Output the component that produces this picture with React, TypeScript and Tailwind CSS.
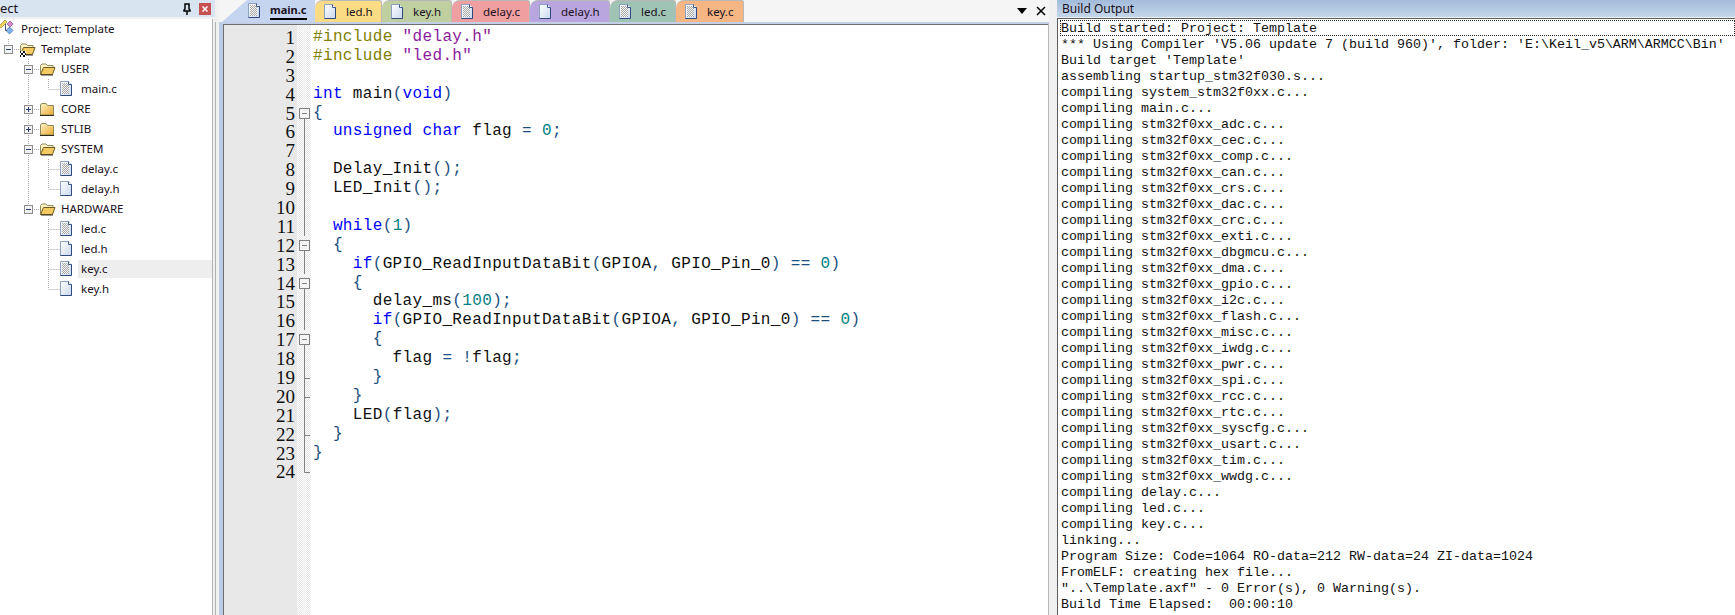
import React from "react";

type CellKind = "none" | "line" | "tee" | "corner" | "plus" | "minus" | "minusEnd";

const TreeCell = ({ kind }: { kind: CellKind }) => {
  const dotted = { stroke: "#a8a8a8", strokeWidth: 1, strokeDasharray: "1 1" };
  const boxed = kind === "plus" || kind === "minus" || kind === "minusEnd";
  return (
    <svg width="20" height="20" className="shrink-0">
      {kind === "line" && <line x1="8.5" y1="0" x2="8.5" y2="20" {...dotted} />}
      {kind === "tee" && (
        <>
          <line x1="8.5" y1="0" x2="8.5" y2="20" {...dotted} />
          <line x1="8.5" y1="10.5" x2="20" y2="10.5" {...dotted} />
        </>
      )}
      {kind === "corner" && (
        <>
          <line x1="8.5" y1="0" x2="8.5" y2="10" {...dotted} />
          <line x1="8.5" y1="10.5" x2="20" y2="10.5" {...dotted} />
        </>
      )}
      {boxed && (
        <>
          <line x1="8.5" y1="0" x2="8.5" y2={kind === "minusEnd" ? 7 : 20} {...dotted} />
          <line x1="12" y1="10.5" x2="20" y2="10.5" {...dotted} />
          <rect x="4.5" y="6.5" width="8" height="8" fill="#f2f2f2" stroke="#8c8c8c" />
          <line x1="6" y1="10.5" x2="11" y2="10.5" stroke="#2a3f7a" />
          {kind === "plus" && <line x1="8.5" y1="8" x2="8.5" y2="13" stroke="#2a3f7a" />}
        </>
      )}
    </svg>
  );
};

const FolderOpen = ({ chip }: { chip?: boolean }) => (
  <svg width="20" height="20" className="shrink-0">
    <path d="M0.5 15.5V6.5L2 5h4l1.500 1.500h5.500v2" fill="#fff3c4" stroke="#8d8a5c" />
    <path d="M0.500 15.500L3.500 8.500H15L12.500 15.500Z" fill="#f4c95f" stroke="#6e5a25" />
    <path d="M1 16h12" stroke="#3a3420" />
    {chip && (
      <g>
        <rect x="-1" y="12" width="7" height="6" fill="#fff" />
        <path d="M-1 12h2v2h-2zM3 12h2v2h-2zM1 14h2v2h-2zM5 14h1v2h-1zM-1 16h2v2h-2zM3 16h2v2h-2z" fill="#111" />
      </g>
    )}
  </svg>
);

const FolderClosed = () => (
  <svg width="20" height="20" className="shrink-0">
    <defs>
      <linearGradient id="closedFolder" x1="0" y1="0" x2="1" y2="1">
        <stop offset="0" stopColor="#fff4c8" />
        <stop offset="1" stopColor="#e9a92f" />
      </linearGradient>
    </defs>
    <path d="M0.500 16V5.500L2 4.500h4l1.500 2h6v9.500z" fill="url(#closedFolder)" stroke="#8d8a5c" />
    <path d="M0 16.500h14" stroke="#2c2a1c" />
  </svg>
);

const FileIcon = ({ hatched }: { hatched: boolean }) => (
  <svg width="14" height="16" className="shrink-0">
    <defs>
      <pattern id="fileHatch" width="2" height="2" patternUnits="userSpaceOnUse">
        <rect width="2" height="2" fill="#f4f4f4" />
        <rect width="1" height="1" fill="#a9a9a9" />
        <rect x="1" y="1" width="1" height="1" fill="#a9a9a9" />
      </pattern>
      <linearGradient id="fileFace" x1="0" y1="0" x2="1" y2="1">
        <stop offset="0" stopColor="#ffffff" />
        <stop offset="1" stopColor="#c9d8ee" />
      </linearGradient>
    </defs>
    <path d="M0.500 0.500H8.500L11.500 3.500V14.500H0.500Z" fill="url(#fileFace)" stroke="#8da0c0" />
    {hatched && <rect x="2" y="2" width="7" height="11" fill="url(#fileHatch)" />}
    <path d="M8.500 0.500V3.500H11.500" fill="#fff" stroke="#3e5a8c" />
    <path d="M11.500 3.500V14.500H0.500" fill="none" stroke="#2f4a7c" />
  </svg>
);

const ProjectIcon = () => (
  <svg width="20" height="20" className="shrink-0">
    <path d="M-1 7L5 1L7 3L1 9Z" fill="#f3d35c" stroke="#8d7a20" strokeWidth="0.6" />
    <path d="M7 5L10 2L13 5L10 8Z" fill="#d98bd0" stroke="#7b3b80" strokeWidth="0.6" />
    <path d="M6 11.500L9.500 8L13 11.500L9.500 15Z" fill="#7fb4e8" stroke="#2a5a9c" strokeWidth="0.6" />
    <path d="M5.500 5V11.500H7" fill="none" stroke="#4a5a7a" />
  </svg>
);

type TreeRow = {
  cells: CellKind[];
  icon: React.ReactNode;
  label: string;
  selected?: boolean;
};

const cFile = <FileIcon hatched />;
const hFile = <FileIcon hatched={false} />;

const treeRows: TreeRow[] = [
  { cells: ["minusEnd"], icon: <FolderOpen chip />, label: "Template" },
  { cells: ["none", "minus"], icon: <FolderOpen />, label: "USER" },
  { cells: ["none", "line", "corner"], icon: cFile, label: "main.c" },
  { cells: ["none", "plus"], icon: <FolderClosed />, label: "CORE" },
  { cells: ["none", "plus"], icon: <FolderClosed />, label: "STLIB" },
  { cells: ["none", "minus"], icon: <FolderOpen />, label: "SYSTEM" },
  { cells: ["none", "line", "tee"], icon: cFile, label: "delay.c" },
  { cells: ["none", "line", "corner"], icon: hFile, label: "delay.h" },
  { cells: ["none", "minusEnd"], icon: <FolderOpen />, label: "HARDWARE" },
  { cells: ["none", "none", "tee"], icon: cFile, label: "led.c" },
  { cells: ["none", "none", "tee"], icon: hFile, label: "led.h" },
  { cells: ["none", "none", "tee"], icon: cFile, label: "key.c", selected: true },
  { cells: ["none", "none", "corner"], icon: hFile, label: "key.h" },
];

const tabs = [
  { name: "led.h", c: false, color: "bg-[#fbdc84]", width: "w-[67px]" },
  { name: "key.h", c: false, color: "bg-[#bfcf9f]", width: "w-[70px]" },
  { name: "delay.c", c: true, color: "bg-[#ef9f9f]", width: "w-[78px]" },
  { name: "delay.h", c: false, color: "bg-[#b9a6de]", width: "w-[80px]" },
  { name: "led.c", c: true, color: "bg-[#9fc3b5]", width: "w-[66px]" },
  { name: "key.c", c: true, color: "bg-[#f6b684]", width: "w-[68px]" },
];

const Kw = ({ children }: { children: React.ReactNode }) => <span className="text-[#0000ff]">{children}</span>;
const Pn = ({ children }: { children: React.ReactNode }) => <span className="text-[#1c4f80]">{children}</span>;
const Nm = ({ children }: { children: React.ReactNode }) => <span className="text-[#008080]">{children}</span>;
const Pp = ({ children }: { children: React.ReactNode }) => <span className="text-[#808000]">{children}</span>;
const St = ({ children }: { children: React.ReactNode }) => <span className="text-[#8c1c9c]">{children}</span>;

const gpioCheck = (
  <>
    <Kw>if</Kw>
    <Pn>(</Pn>GPIO_ReadInputDataBit<Pn>(</Pn>GPIOA<Pn>,</Pn> GPIO_Pin_0<Pn>)</Pn> <Pn>==</Pn> <Nm>0</Nm>
    <Pn>)</Pn>
  </>
);

type Fold = "" | "box" | "line" | "tick" | "end";

const codeLines: { text: React.ReactNode; fold: Fold }[] = [
  { text: <><Pp>#include</Pp> <St>"delay.h"</St></>, fold: "" },
  { text: <><Pp>#include</Pp> <St>"led.h"</St></>, fold: "" },
  { text: "", fold: "" },
  { text: <><Kw>int</Kw> main<Pn>(</Pn><Kw>void</Kw><Pn>)</Pn></>, fold: "" },
  { text: <Pn>{"{"}</Pn>, fold: "box" },
  { text: <>  <Kw>unsigned</Kw> <Kw>char</Kw> flag <Pn>=</Pn> <Nm>0</Nm><Pn>;</Pn></>, fold: "line" },
  { text: "", fold: "line" },
  { text: <>  Delay_Init<Pn>();</Pn></>, fold: "line" },
  { text: <>  LED_Init<Pn>();</Pn></>, fold: "line" },
  { text: "", fold: "line" },
  { text: <>  <Kw>while</Kw><Pn>(</Pn><Nm>1</Nm><Pn>)</Pn></>, fold: "line" },
  { text: <>  <Pn>{"{"}</Pn></>, fold: "box" },
  { text: <>    {gpioCheck}</>, fold: "line" },
  { text: <>    <Pn>{"{"}</Pn></>, fold: "box" },
  { text: <>      delay_ms<Pn>(</Pn><Nm>100</Nm><Pn>);</Pn></>, fold: "line" },
  { text: <>      {gpioCheck}</>, fold: "line" },
  { text: <>      <Pn>{"{"}</Pn></>, fold: "box" },
  { text: <>        flag <Pn>= !</Pn>flag<Pn>;</Pn></>, fold: "line" },
  { text: <>      <Pn>{"}"}</Pn></>, fold: "tick" },
  { text: <>    <Pn>{"}"}</Pn></>, fold: "tick" },
  { text: <>    LED<Pn>(</Pn>flag<Pn>);</Pn></>, fold: "line" },
  { text: <>  <Pn>{"}"}</Pn></>, fold: "tick" },
  { text: <Pn>{"}"}</Pn>, fold: "line" },
  { text: "", fold: "end" },
];

const FoldMark = ({ kind }: { kind: Fold }) => (
  <svg width="14" height="19" className="shrink-0">
    {kind === "box" && (
      <>
        <line x1="7.500" y1="14" x2="7.500" y2="19" stroke="#808080" />
        <rect x="2.500" y="4.500" width="10" height="10" fill="#f4f4f4" stroke="#808080" />
        <line x1="5" y1="9.500" x2="10" y2="9.500" stroke="#808080" />
      </>
    )}
    {kind === "line" && <line x1="7.500" y1="0" x2="7.500" y2="19" stroke="#808080" />}
    {kind === "tick" && (
      <>
        <line x1="7.500" y1="0" x2="7.500" y2="19" stroke="#808080" />
        <line x1="7.500" y1="10.500" x2="13" y2="10.500" stroke="#808080" />
      </>
    )}
    {kind === "end" && <path d="M7.500 0V10.500H13" fill="none" stroke="#808080" />}
  </svg>
);

const stmFiles = [
  "adc", "cec", "comp", "can", "crs", "dac", "crc", "exti", "dbgmcu", "dma", "gpio", "i2c", "flash",
  "misc", "iwdg", "pwr", "spi", "rcc", "rtc", "syscfg", "usart", "tim", "wwdg",
];

const buildLines = [
  "*** Using Compiler 'V5.06 update 7 (build 960)', folder: 'E:\\Keil_v5\\ARM\\ARMCC\\Bin'",
  "Build target 'Template'",
  "assembling startup_stm32f030.s...",
  "compiling system_stm32f0xx.c...",
  "compiling main.c...",
  ...stmFiles.map((f) => `compiling stm32f0xx_${f}.c...`),
  "compiling delay.c...",
  "compiling led.c...",
  "compiling key.c...",
  "linking...",
  "Program Size: Code=1064 RO-data=212 RW-data=24 ZI-data=1024",
  "FromELF: creating hex file...",
  '"..\\Template.axf" - 0 Error(s), 0 Warning(s).',
  "Build Time Elapsed:  00:00:10",
];

export default function App() {
  return (
    <div className="flex h-[615px] w-[1735px] overflow-hidden bg-[#f0f0f0] font-['Noto_Sans',sans-serif] text-[11.5px] text-[#1a1020]">
      {/* Project panel */}
      <div className="flex w-[215px] shrink-0 flex-col">
        <div className="flex h-[17px] shrink-0 items-center bg-[#d8e4f0] pr-[4px]">
          <span className="text-[13px]">ect</span>
          <svg width="10" height="12" viewBox="0 0 10 12" className="ml-auto shrink-0">
            <path d="M3 1h4v5l1 1v1H2V7l1-1zM5 8v4" fill="none" stroke="#000" strokeWidth="1.500" />
          </svg>
          <div className="ml-[7px] flex h-[12px] w-[12px] shrink-0 items-center justify-center bg-[#c75050]">
            <svg width="6" height="6" viewBox="0 0 6 6">
              <path d="M0.500 0.500L5.500 5.500M5.500 0.500L0.500 5.500" stroke="#fff" strokeWidth="1.500" />
            </svg>
          </div>
        </div>
        <div className="mt-[2px] mr-[2px] flex-1 border-r border-[#b4b4b4] bg-white">
          <div className="flex h-[20px] items-center">
            <ProjectIcon />
            <span className="ml-[1px]">Project: Template</span>
          </div>
          {treeRows.map((row) => (
            <div key={row.label} className="flex h-[20px] items-center">
              {row.cells.map((c, i) => (
                <TreeCell key={i} kind={c} />
              ))}
              <div className="flex h-[20px] w-[20px] shrink-0 items-center">{row.icon}</div>
              <span className={`-ml-[2px] flex h-[18px] flex-1 items-center pl-[3px] ${row.selected ? "bg-[#eeeeee]" : ""}`}>
                {row.label}
              </span>
            </div>
          ))}
        </div>
      </div>

      {/* Editor */}
      <div className="flex w-[834px] shrink-0 flex-col pl-[4px]">
        <div className="flex h-[22px] shrink-0 items-stretch bg-[#f5f5f5]">
          <div className="flex w-[96px] items-center bg-[#c5d5f0] pl-[29px] [clip-path:polygon(3px_100%,28px_0,100%_0,100%_100%)]">
            <FileIcon hatched />
            <span className="ml-[8px] border-b-2 border-black text-[11px] font-bold leading-[16px]">main.c</span>
          </div>
          {tabs.map((t) => (
            <div
              key={t.name}
              className={`flex items-center rounded-tl-[8px] rounded-tr-[3px] border-t border-r border-[#b8b8b8] pl-[9px] ${t.color} ${t.width}`}
            >
              <FileIcon hatched={t.c} />
              <span className="ml-[8px]">{t.name}</span>
            </div>
          ))}
          <div className="ml-auto flex items-center pr-[3px]">
            <svg width="10" height="6" viewBox="0 0 10 6">
              <path d="M0 0H10L5 6Z" fill="#000" />
            </svg>
            <svg width="10" height="10" viewBox="0 0 10 10" className="ml-[9px]">
              <path d="M1 1L9 9M9 1L1 9" stroke="#000" strokeWidth="1.500" />
            </svg>
          </div>
        </div>
        <div className="-ml-[4px] flex min-h-0 flex-1 border-l border-[#b0b0b0] pl-[3px]">
          <div className="flex min-w-0 flex-1 border-t-2 border-l-[4px] border-t-[#c2cfe6] border-l-[#bccbe6]">
            <div className="min-w-0 flex-1 border-t border-l border-[#6e6e6e] bg-white font-['Liberation_Mono',monospace] text-[16px] tracking-[0.35px] text-[#101010]">
              <div className="flex h-full">
                <div className="w-[73px] shrink-0 bg-[#e8e8e8]" />
                <div className="w-[14px] shrink-0 bg-[repeating-conic-gradient(#e8e8e8_0_25%,#ffffff_0_50%)] bg-[length:2px_2px]" />
                <div className="-ml-[87px] pt-[3px]">
                  {codeLines.map((line, i) => (
                    <div key={i} className="flex h-[18.9px] items-center">
                      <span className="w-[71px] shrink-0 text-right font-['Liberation_Serif',serif] text-[19px] leading-[19px] tracking-normal">
                        {i + 1}
                      </span>
                      <span className="w-[2px] shrink-0" />
                      <FoldMark kind={line.fold} />
                      <span className="ml-[2px] whitespace-pre leading-[19px]">{line.text}</span>
                    </div>
                  ))}
                </div>
              </div>
            </div>
            <div className="w-[1px] bg-[#b8b8b8]" />
          </div>
        </div>
      </div>

      {/* Build output */}
      <div className="ml-[8px] flex min-w-0 flex-1 flex-col">
        <div className="flex h-[17px] shrink-0 items-center bg-linear-to-b from-[#a3bcda] to-[#c4d6ea] pl-[5px] text-[12px]">
          Build Output
        </div>
        <div className="mt-[1px] min-h-0 flex-1 border-t border-l border-[#5a5a5a] bg-white pt-[1px] pl-[2px] font-['Liberation_Mono',monospace] text-[13.33px] leading-[16px] text-[#111]">
          <div className="h-[16px] border border-dotted border-[#222] whitespace-pre">Build started: Project: Template</div>
          {buildLines.map((l, i) => (
            <div key={i} className="h-[16px] pt-[1px] pl-[1px] whitespace-pre">
              {l}
            </div>
          ))}
        </div>
      </div>
    </div>
  );
}
